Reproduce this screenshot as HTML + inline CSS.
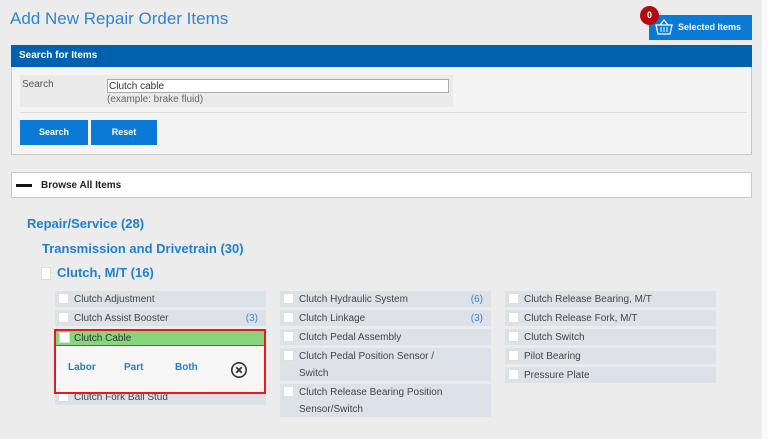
<!DOCTYPE html><html><head><style>
*{margin:0;padding:0;box-sizing:border-box}
body{width:768px;height:439px;background:#ececec;font-family:"Liberation Sans",sans-serif;position:relative;overflow:hidden;font-size:10px;color:#333}
.a{position:absolute}
.btn{position:absolute;background:#0b7ad6;color:#fff;font-weight:bold;font-size:9px;text-align:center;line-height:25px}
.cb{position:absolute;width:11px;height:11px;background:#fff;border:1px solid #ddd}
.row{position:absolute;background:#dde2e9;height:16px;width:211px;font-size:10px;line-height:17px;color:#444}
.row span.t{position:absolute;left:19px}
.row .cb{left:3px;top:2px}
.row span.n{position:absolute;right:8px;color:#3a85d0}
</style></head><body>
<div class="a" style="left:762px;top:0;width:6px;height:439px;background:#fafafa"></div>
<div class="a" style="left:10px;top:9px;font-size:17px;color:#2a86d8">Add New Repair Order Items</div>
<div class="a" style="left:649px;top:15px;width:103px;height:25px;background:#0b7ad6;color:#fff;font-weight:bold;font-size:9px;line-height:25px;padding-left:29px">Selected Items</div>
<svg class="a" style="left:655px;top:18px" width="18" height="18" viewBox="0 0 18 18"><path d="M5 7 L9 2 L13 7" fill="none" stroke="#fff" stroke-width="1.2"/><path d="M1 7 H17 L15 16 H3 Z" fill="none" stroke="#fff" stroke-width="1.3"/><path d="M6 9V14M9 9V14M12 9V14" stroke="#fff" stroke-width="1"/></svg>
<div class="a" style="left:640px;top:6px;width:19px;height:19px;border-radius:50%;background:#b5090f;color:#fff;font-weight:bold;font-size:9px;text-align:center;line-height:19px">0</div>
<div class="a" style="left:11px;top:45px;width:741px;height:110px;background:#f4f4f4;border:1px solid #c8c8c8"></div>
<div class="a" style="left:11px;top:45px;width:741px;height:22px;background:#0061ae;color:#fff;font-weight:bold;font-size:10px;line-height:22px;padding-left:8px">Search for Items</div>
<div class="a" style="left:20px;top:75px;width:433px;height:32px;background:#eaeaea"></div>
<div class="a" style="left:22px;top:79px;color:#555">Search</div>
<div class="a" style="left:107px;top:79px;width:342px;height:14px;background:#fff;border:1px solid #aaa;font-size:10px;line-height:13px;padding-left:1px;color:#333">Clutch cable</div>
<div class="a" style="left:107px;top:94px;color:#666">(example: brake fluid)</div>
<div class="a" style="left:20px;top:112px;width:727px;height:1px;background:#ddd"></div>
<div class="btn" style="left:20px;top:120px;width:68px">Search</div>
<div class="btn" style="left:91px;top:120px;width:66px">Reset</div>
<div class="a" style="left:11px;top:172px;width:741px;height:26px;background:#fff;border:1px solid #c8c8c8"></div>
<div class="a" style="left:16px;top:184px;width:16px;height:3px;background:#111"></div>
<div class="a" style="left:41px;top:180px;font-weight:bold;font-size:10px;color:#222">Browse All Items</div>
<div class="a" style="left:27px;top:216px;font-weight:bold;font-size:13px;color:#1f7fd6">Repair/Service (28)</div>
<div class="a" style="left:42px;top:241px;font-weight:bold;font-size:13px;color:#1f7fd6">Transmission and Drivetrain (30)</div>
<div class="cb" style="left:41px;top:267px;width:10px;height:13px"></div>
<div class="a" style="left:57px;top:265px;font-weight:bold;font-size:13px;color:#1f7fd6">Clutch, M/T (16)</div>

<div class="row" style="left:55px;top:291px"><span class="cb"></span><span class="t">Clutch Adjustment</span></div>
<div class="row" style="left:55px;top:310px"><span class="cb"></span><span class="t">Clutch Assist Booster</span><span class="n">(3)</span></div>
<div class="row" style="left:55px;top:389px"><span class="cb"></span><span class="t">Clutch Fork Ball Stud</span></div>
<div class="a" style="left:54px;top:329px;width:212px;height:65px;background:#f6f6f6;border:2px solid #e21b23"></div>
<div class="a" style="left:56px;top:331px;width:208px;height:15px;background:#86d67c;border-bottom:1px solid #2f8a2a;font-size:10px;line-height:15px;color:#333"><span class="cb" style="left:3px;top:1px"></span><span style="position:absolute;left:18px">Clutch Cable</span></div>
<div class="a" style="left:68px;top:362px;font-weight:bold;color:#1f7fd6">Labor</div>
<div class="a" style="left:124px;top:362px;font-weight:bold;color:#1f7fd6">Part</div>
<div class="a" style="left:175px;top:362px;font-weight:bold;color:#1f7fd6">Both</div>
<svg class="a" style="left:230px;top:361px" width="18" height="18" viewBox="0 0 18 18"><circle cx="9" cy="9" r="7.2" fill="none" stroke="#333" stroke-width="1.6"/><path d="M6.3 6.3L11.7 11.7M11.7 6.3L6.3 11.7" stroke="#333" stroke-width="1.8"/></svg>

<div class="row" style="left:280px;top:291px"><span class="cb"></span><span class="t">Clutch Hydraulic System</span><span class="n">(6)</span></div>
<div class="row" style="left:280px;top:310px"><span class="cb"></span><span class="t">Clutch Linkage</span><span class="n">(3)</span></div>
<div class="row" style="left:280px;top:329px"><span class="cb"></span><span class="t">Clutch Pedal Assembly</span></div>
<div class="row" style="left:280px;top:348px;height:33px"><span class="cb"></span><span class="t">Clutch Pedal Position Sensor /<br>Switch</span></div>
<div class="row" style="left:280px;top:384px;height:33px"><span class="cb"></span><span class="t">Clutch Release Bearing Position<br>Sensor/Switch</span></div>

<div class="row" style="left:505px;top:291px"><span class="cb"></span><span class="t">Clutch Release Bearing, M/T</span></div>
<div class="row" style="left:505px;top:310px"><span class="cb"></span><span class="t">Clutch Release Fork, M/T</span></div>
<div class="row" style="left:505px;top:329px"><span class="cb"></span><span class="t">Clutch Switch</span></div>
<div class="row" style="left:505px;top:348px"><span class="cb"></span><span class="t">Pilot Bearing</span></div>
<div class="row" style="left:505px;top:367px"><span class="cb"></span><span class="t">Pressure Plate</span></div>
</body></html>
